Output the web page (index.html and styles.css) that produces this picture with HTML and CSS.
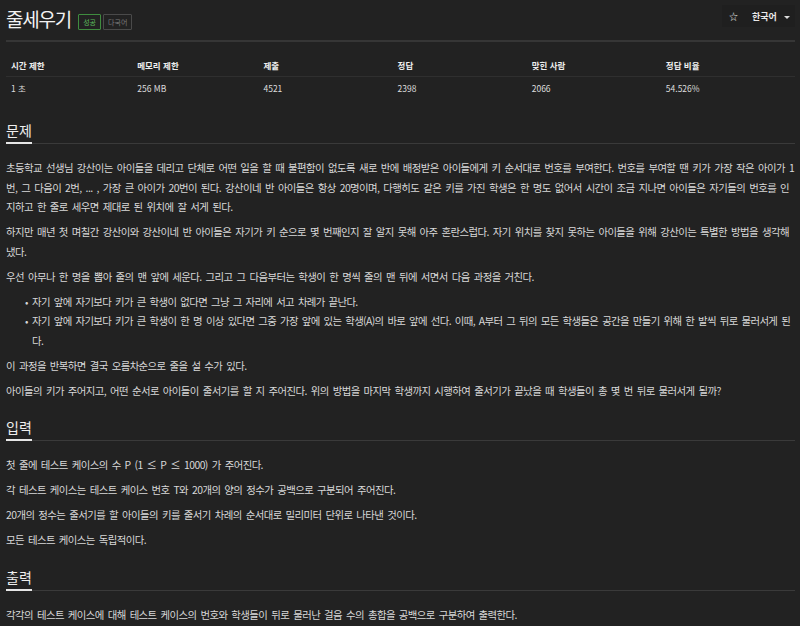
FILE: index.html
```html
<!DOCTYPE html>
<html lang="ko">
<head>
    <meta charset="UTF-8">
    <meta name="viewport" content="width=device-width, initial-scale=1.0">
    <title>줄세우기</title>
    <link rel="stylesheet" href="styles.css">
</head>
<body>
    <div class="page">
        <header class="problem-header">
            <div class="title-wrap">
                <h1 class="problem-title">줄세우기</h1>
                <span class="label label-success">성공</span>
                <span class="label label-default">다국어</span>
            </div>
            <div class="header-buttons">
                <button class="btn-star">☆</button>
                <button class="btn-lang">한국어 <span class="caret"></span></button>
            </div>
        </header>

        <table class="problem-info">
            <thead>
                <tr>
                    <th>시간 제한</th>
                    <th>메모리 제한</th>
                    <th>제출</th>
                    <th>정답</th>
                    <th>맞힌 사람</th>
                    <th>정답 비율</th>
                </tr>
            </thead>
            <tbody>
                <tr>
                    <td>1 초</td>
                    <td>256 MB</td>
                    <td>4521</td>
                    <td>2398</td>
                    <td>2066</td>
                    <td>54.526%</td>
                </tr>
            </tbody>
        </table>

        <section class="problem-section">
            <h2 class="section-title"><span>문제</span></h2>
            <div class="section-body">
                <p>초등학교 선생님 강산이는 아이들을 데리고 단체로 어떤 일을 할 때 불편함이 없도록 새로 반에 배정받은 아이들에게 키 순서대로 번호를 부여한다. 번호를 부여할 땐 키가 가장 작은 아이가 1번, 그 다음이 2번, ... , 가장 큰 아이가 20번이 된다. 강산이네 반 아이들은 항상 20명이며, 다행히도 같은 키를 가진 학생은 한 명도 없어서 시간이 조금 지나면 아이들은 자기들의 번호를 인지하고 한 줄로 세우면 제대로 된 위치에 잘 서게 된다.</p>
                <p>하지만 매년 첫 며칠간 강산이와 강산이네 반 아이들은 자기가 키 순으로 몇 번째인지 잘 알지 못해 아주 혼란스럽다. 자기 위치를 찾지 못하는 아이들을 위해 강산이는 특별한 방법을 생각해 냈다.</p>
                <p>우선 아무나 한 명을 뽑아 줄의 맨 앞에 세운다. 그리고 그 다음부터는 학생이 한 명씩 줄의 맨 뒤에 서면서 다음 과정을 거친다.</p>
                <ul>
                    <li>자기 앞에 자기보다 키가 큰 학생이 없다면 그냥 그 자리에 서고 차례가 끝난다.</li>
                    <li>자기 앞에 자기보다 키가 큰 학생이 한 명 이상 있다면 그중 가장 앞에 있는 학생(A)의 바로 앞에 선다. 이때, A부터 그 뒤의 모든 학생들은 공간을 만들기 위해 한 발씩 뒤로 물러서게 된다.</li>
                </ul>
                <p>이 과정을 반복하면 결국 오름차순으로 줄을 설 수가 있다.</p>
                <p>아이들의 키가 주어지고, 어떤 순서로 아이들이 줄서기를 할 지 주어진다. 위의 방법을 마지막 학생까지 시행하여 줄서기가 끝났을 때 학생들이 총 몇 번 뒤로 물러서게 될까?</p>
            </div>
        </section>

        <section class="problem-section">
            <h2 class="section-title"><span>입력</span></h2>
            <div class="section-body">
                <p>첫 줄에 테스트 케이스의 수 P (1 ≤ P ≤ 1000) 가 주어진다.</p>
                <p>각 테스트 케이스는 테스트 케이스 번호 T와 20개의 양의 정수가 공백으로 구분되어 주어진다.</p>
                <p>20개의 정수는 줄서기를 할 아이들의 키를 줄서기 차례의 순서대로 밀리미터 단위로 나타낸 것이다.</p>
                <p>모든 테스트 케이스는 독립적이다.</p>
            </div>
        </section>

        <section class="problem-section">
            <h2 class="section-title"><span>출력</span></h2>
            <div class="section-body">
                <p>각각의 테스트 케이스에 대해 테스트 케이스의 번호와 학생들이 뒤로 물러난 걸음 수의 총합을 공백으로 구분하여 출력한다.</p>
            </div>
        </section>
    </div>
</body>
</html>
```

FILE: styles.css
```css
* {
    box-sizing: border-box;
    margin: 0;
    padding: 0;
}

body {
    background: #222222;
    color: #d8d8d8;
    font-family: "Noto Sans CJK KR", "Noto Sans", sans-serif;
    font-size: 10px;
}

.page {
    padding: 0 5px 0 6px;
}

.problem-header {
    display: flex;
    justify-content: space-between;
    align-items: flex-start;
    height: 42px;
    border-bottom: 2px solid #363636;
}

.title-wrap {
    display: flex;
    align-items: center;
    padding-top: 6px;
}

.problem-title {
    font-size: 19px;
    font-weight: 400;
    letter-spacing: -1.2px;
    color: #f2f2f2;
    line-height: 26px;
    margin-right: 7px;
}

.label {
    display: inline-block;
    font-size: 7px;
    line-height: 14px;
    padding: 0 4px;
    margin-top: 5px;
    margin-right: 2px;
    border: 1px solid;
    border-radius: 1px;
}

.label-success {
    color: #5cb85c;
    border-color: #3f8c3f;
}

.label-default {
    color: #7a7a7a;
    border-color: #4a4a4a;
}

.header-buttons {
    display: flex;
    margin-top: 5px;
}

.header-buttons button {
    background: #1f1f1f;
    border: none;
    color: #e8e8e8;
    font-family: inherit;
    height: 22px;
    font-size: 9px;
}

.btn-star {
    width: 23px;
    font-size: 11px;
}

.btn-lang {
    width: 50px;
    font-weight: 700;
    text-align: left;
    padding-left: 7px;
}

.caret {
    display: inline-block;
    margin-left: 5px;
    vertical-align: middle;
    border-top: 3px solid #ddd;
    border-left: 3px solid transparent;
    border-right: 3px solid transparent;
}

.problem-info {
    width: 100%;
    margin-top: 12px;
    border-collapse: collapse;
    table-layout: fixed;
    font-size: 8.5px;
}

.problem-info th,
.problem-info td {
    text-align: left;
    padding: 4px 5px;
    line-height: 14px;
}

.problem-info th {
    color: #eeeeee;
    font-weight: 700;
    border-bottom: 1px solid #2f2f2f;
}

.problem-info td {
    color: #dddddd;
}

.problem-info th:nth-child(1),
.problem-info th:nth-child(2) {
    width: 16%;
}

.problem-section {
    margin-top: 21px;
}

.problem-section + .problem-section {
    margin-top: 17px;
}

.section-title {
    display: flex;
    font-size: 14px;
    font-weight: 400;
    color: #eeeeee;
    line-height: 20px;
    border-bottom: 1px solid #3a3a3a;
    margin-bottom: 14px;
}

.section-title span {
    padding-bottom: 2px;
    border-bottom: 2px solid #e6e6e6;
    margin-bottom: -1px;
}

.section-body p,
.section-body li {
    font-size: 10.4px;
    line-height: 19.5px;
    letter-spacing: -0.57px;
    word-spacing: 1.6px;
}

.section-body li {
    letter-spacing: -0.63px;
}

.section-body p {
    margin-bottom: 5.5px;
}

.section-body ul {
    list-style: none;
    padding-left: 26px;
    margin-bottom: 5.5px;
}

.section-body li::before {
    content: "•";
    display: inline-block;
    width: 7px;
    margin-left: -7px;
    font-size: 10px;
}
```
